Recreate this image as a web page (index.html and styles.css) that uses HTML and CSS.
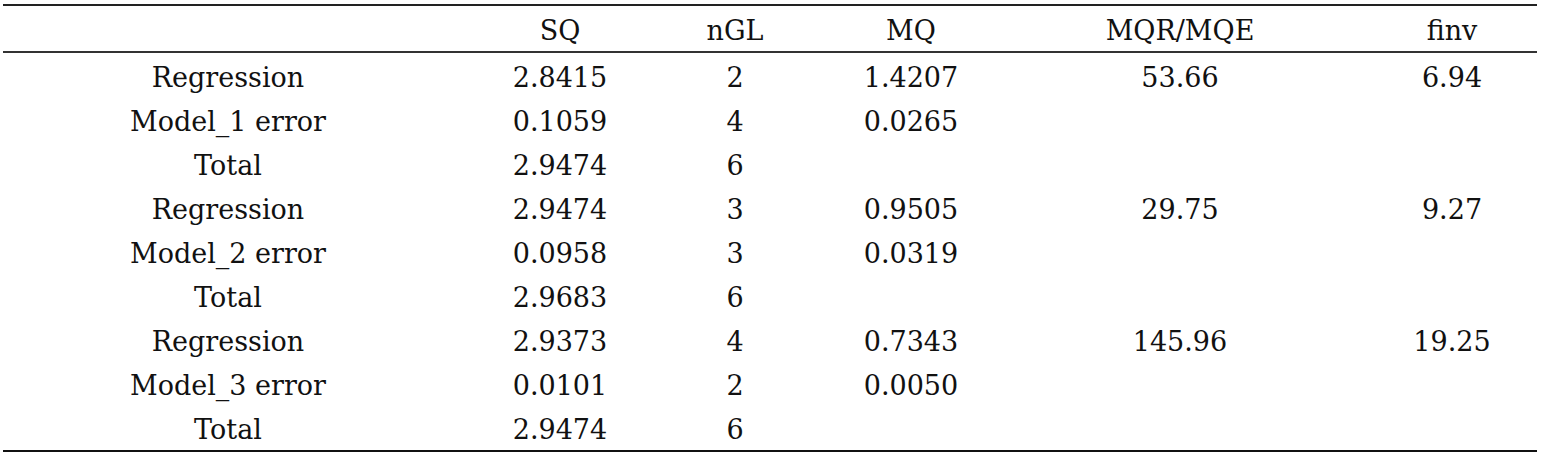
FILE: index.html
```html
<!DOCTYPE html>
<html lang="en">
<head>
    <meta charset="UTF-8">
    <meta name="viewport" content="width=device-width, initial-scale=1.0">
    <title>ANOVA Models</title>
    <link rel="stylesheet" href="styles.css">
</head>
<body>
    <div class="anova">
        <table>
            <colgroup>
                <col class="c-label">
                <col class="c-sq">
                <col class="c-ngl">
                <col class="c-mq">
                <col class="c-ratio">
                <col class="c-finv">
            </colgroup>
            <thead>
                <tr>
                    <th class="label"></th>
                    <th>SQ</th>
                    <th>nGL</th>
                    <th>MQ</th>
                    <th>MQR/MQE</th>
                    <th>finv</th>
                </tr>
            </thead>
            <tbody>
                <tr>
                    <td class="label">Regression</td>
                    <td>2.8415</td>
                    <td>2</td>
                    <td>1.4207</td>
                    <td>53.66</td>
                    <td>6.94</td>
                </tr>
                <tr>
                    <td class="label">Model_1 error</td>
                    <td>0.1059</td>
                    <td>4</td>
                    <td>0.0265</td>
                    <td></td>
                    <td></td>
                </tr>
                <tr>
                    <td class="label">Total</td>
                    <td>2.9474</td>
                    <td>6</td>
                    <td></td>
                    <td></td>
                    <td></td>
                </tr>
                <tr>
                    <td class="label">Regression</td>
                    <td>2.9474</td>
                    <td>3</td>
                    <td>0.9505</td>
                    <td>29.75</td>
                    <td>9.27</td>
                </tr>
                <tr>
                    <td class="label">Model_2 error</td>
                    <td>0.0958</td>
                    <td>3</td>
                    <td>0.0319</td>
                    <td></td>
                    <td></td>
                </tr>
                <tr>
                    <td class="label">Total</td>
                    <td>2.9683</td>
                    <td>6</td>
                    <td></td>
                    <td></td>
                    <td></td>
                </tr>
                <tr>
                    <td class="label">Regression</td>
                    <td>2.9373</td>
                    <td>4</td>
                    <td>0.7343</td>
                    <td>145.96</td>
                    <td>19.25</td>
                </tr>
                <tr>
                    <td class="label">Model_3 error</td>
                    <td>0.0101</td>
                    <td>2</td>
                    <td>0.0050</td>
                    <td></td>
                    <td></td>
                </tr>
                <tr>
                    <td class="label">Total</td>
                    <td>2.9474</td>
                    <td>6</td>
                    <td></td>
                    <td></td>
                    <td></td>
                </tr>
            </tbody>
        </table>
    </div>
</body>
</html>
```

FILE: styles.css
```css
body {
    margin: 0;
    background-color: white;
    font-family: 'DejaVu Serif', 'Liberation Serif', serif;
    color: #111;
}
.anova {
    width: 1534px;
    margin: 4px 0 0 3px;
    border-top: 2px solid #222;
    border-bottom: 2px solid #111;
    padding-bottom: 1px;
}
table {
    width: 100%;
    border-collapse: collapse;
    table-layout: fixed;
    font-size: 27px;
}
.c-label { width: 476px; }
.c-sq { width: 162px; }
.c-ngl { width: 188px; }
.c-mq { width: 164px; }
.c-ratio { width: 374px; }
.c-finv { width: 170px; }
th, td {
    padding: 0;
    text-align: center;
    white-space: nowrap;
}
th {
    font-weight: normal;
    line-height: 40px;
    padding-top: 5px;
    border-bottom: 2px solid #333;
}
td {
    line-height: 38px;
    padding-top: 6px;
}
.label {
    padding-right: 26px;
}
```
